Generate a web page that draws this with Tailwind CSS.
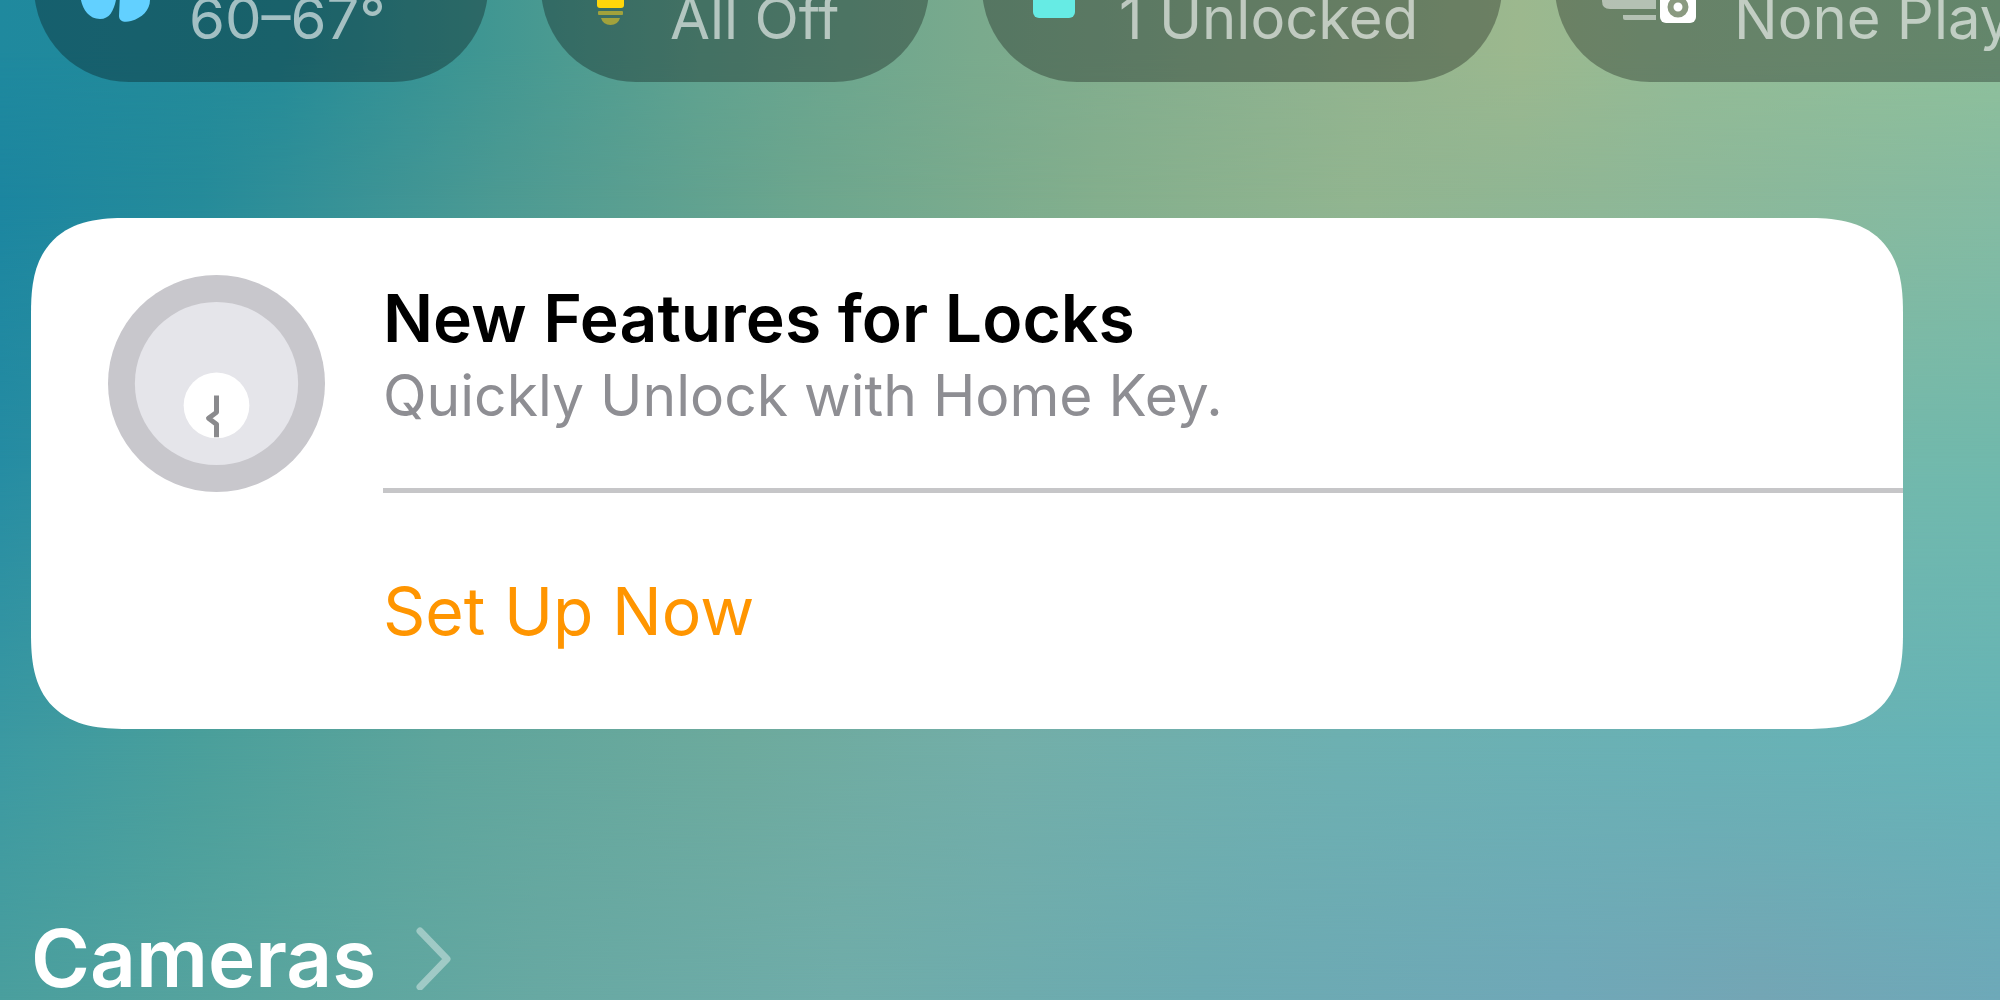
<!DOCTYPE html>
<html lang="en">
<head>
  <meta charset="UTF-8" />
  <meta name="viewport" content="width=device-width, initial-scale=1" />
  <title>Home</title>
  <script src="https://cdn.jsdelivr.net/npm/@tailwindcss/browser@4"></script>
</head>
<body class="relative isolate h-screen overflow-hidden font-[Inter,'Liberation_Sans',sans-serif]">

  <!-- wallpaper: one horizontal gradient per band, each fading into the next one down -->
  <div class="absolute inset-0 -z-10 bg-[linear-gradient(90deg,#4a9f9e_0%,#5ba69f_15%,#68a9a3_27%,#70adaa_42%,#6cabb2_60%,#70a8b8_78%,#74a6b5_88%,#6ea9b9_100%)]" aria-hidden="true">
    <div class="absolute inset-0 bg-[linear-gradient(90deg,#3b99a2_0%,#4a9f9b_10%,#5ea59c_22%,#6daa9d_37%,#73aea8_50%,#6db0b1_67%,#69b1b5_85%,#66b4b6_100%)] [mask-image:linear-gradient(#000_74%,transparent_100%)]"></div>
    <div class="absolute inset-0 bg-[linear-gradient(90deg,#258ca3_0%,#3a9699_12%,#67a694_40%,#7fb09a_65%,#76b6a6_88%,#72b9ac_96%,#71b9ac_100%)] [mask-image:linear-gradient(#000_46%,transparent_74%)]"></div>
    <div class="absolute inset-0 bg-[linear-gradient(90deg,#1c86a0_0%,#258b9a_10%,#4c9a93_25%,#6ca68e_40%,#84af8d_55%,#92b590_68%,#8fb796_80%,#85bba2_100%)] [mask-image:linear-gradient(#000_20%,transparent_46%)]"></div>
    <div class="absolute inset-0 bg-[linear-gradient(90deg,#1f899e_0%,#248b98_14%,#3f9692_24%,#60a28f_35%,#7aaa8d_49%,#8fb28f_65%,#9cb88e_76%,#94bb96_84%,#8fc09a_100%)] [mask-image:linear-gradient(#000_5%,transparent_20%)]"></div>
  </div>

  <!-- category pills, scrolled half out of view -->
  <nav class="-mt-[108px] flex gap-[53px] overflow-hidden pl-[34px] text-[58px] leading-16 whitespace-nowrap text-white/60" aria-label="Categories">
    <button class="flex h-[190px] w-[454px] shrink-0 items-end gap-[33px] rounded-[95px] bg-black/30 pb-8 pl-[42px]">
      <svg class="h-16 w-20 shrink-0" viewBox="0 0 80 64" fill="#62d0ff" aria-hidden="true">
        <path d="M4 8C5 20 11 33 24 33C35 33 39 22 41 8Z" />
        <path d="M44 8L43 30C43 35 48 37 55 35C66 32 74 24 74 14C74 12 72 10 70 8Z" />
      </svg>
      <span>60–67°</span>
    </button>
    <button class="flex h-[190px] w-[388px] shrink-0 items-end gap-[33px] rounded-[95px] bg-black/30 pb-8 pl-[42px]">
      <svg class="h-16 w-[54px] shrink-0" viewBox="0 0 54 64" aria-hidden="true">
        <path d="M14 4H41V19Q41 22 38 22H17Q14 22 14 19Z" fill="#ffd60a" />
        <rect x="15" y="25" width="25" height="4" rx="1" fill="#a1a23c" />
        <path d="M18 32H37Q35 39 27.500 39Q20 39 18 32Z" fill="#a1a23c" />
      </svg>
      <span>All Off</span>
    </button>
    <button class="flex h-[190px] w-[520px] shrink-0 items-end gap-[33px] rounded-[95px] bg-black/30 pb-8 pl-[42px]">
      <svg class="h-16 w-[62px] shrink-0" viewBox="0 0 62 64" aria-hidden="true">
        <rect x="9" y="-10" width="42" height="42" rx="6" fill="#66ebe4" />
      </svg>
      <span>1 Unlocked</span>
    </button>
    <button class="flex h-[190px] w-[620px] shrink-0 items-end gap-[33px] rounded-[95px] bg-black/30 pb-8 pl-[42px]">
      <svg class="h-16 w-[104px] shrink-0" viewBox="0 0 104 64" aria-hidden="true">
        <path d="M5 0H59V23H13Q5 23 5 15Z" fill="#fff" fill-opacity=".5" />
        <path d="M26 29H59V34H28Q26 34 26 32Z" fill="#fff" fill-opacity=".5" />
        <rect x="63" y="-7" width="36" height="44" rx="6" fill="#fff" />
        <circle cx="81" cy="21" r="7.500" fill="none" stroke="#8a9a80" stroke-width="6" />
      </svg>
      <span>None Playing</span>
    </button>
  </nav>

  <main class="pt-[136px] pr-[97px] pl-[31px]">
    <section class="flex overflow-hidden rounded-[96px] bg-white pl-[77px] [corner-shape:superellipse(1.4)]">
      <svg class="mt-[57px] mr-[58px] size-[217px] shrink-0" viewBox="0 0 218 218" aria-hidden="true">
        <circle cx="109" cy="109" r="109" fill="#c8c7cc" />
        <circle cx="109" cy="109" r="82" fill="#e5e5ea" />
        <circle cx="109" cy="131" r="33" fill="#fff" />
        <path d="M109 121V138L101 144L109 150V163" fill="none" stroke="#8a8a8d" stroke-width="5" stroke-linejoin="round" />
      </svg>
      <div class="grow">
        <div class="border-b-5 border-[#c6c6c8] py-15">
          <h2 class="text-[66px] leading-20 font-semibold text-black">New Features for Locks</h2>
          <p class="mt-[6px] text-[57px] leading-16 text-[#8e8e93]">Quickly Unlock with Home Key.</p>
        </div>
        <button class="block w-full py-[78px] text-left text-[66px] leading-20 text-[#ff9500]">Set Up Now</button>
      </div>
    </section>

    <a href="#cameras" class="mt-[181px] flex w-fit items-center gap-10 text-white">
      <h2 class="text-[80px] leading-24 font-semibold">Cameras</h2>
      <svg class="h-16 w-9" viewBox="0 0 36 64" fill="none" stroke="#fff" stroke-opacity=".4" stroke-width="7" stroke-linecap="round" stroke-linejoin="round" aria-hidden="true">
        <path d="M4 5L31 33L4 61" />
      </svg>
    </a>
  </main>
</body>
</html>
